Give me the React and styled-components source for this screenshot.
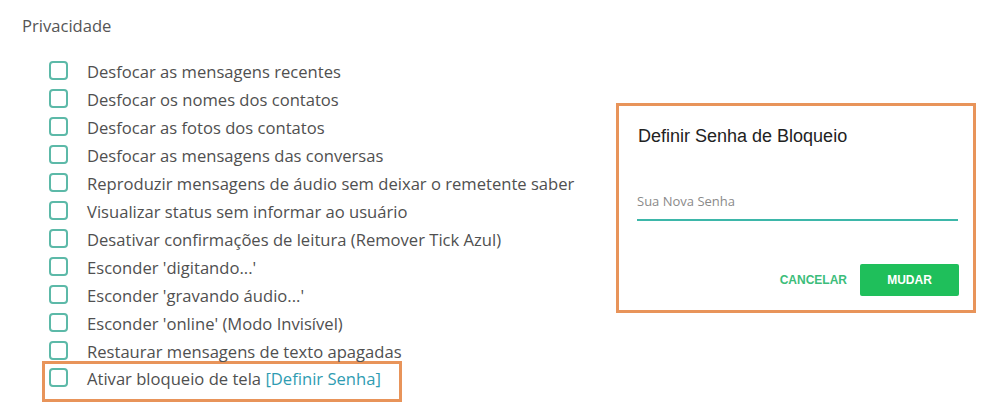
import React, { useState } from 'react'
import styled, { createGlobalStyle } from 'styled-components'

const GlobalStyle = createGlobalStyle`
  html, body {
    margin: 0;
    padding: 0;
    background: #fff;
  }
  body {
    font-family: 'Open Sans', 'Noto Sans', sans-serif;
    color: #444;
  }
`

const Page = styled.div`
  width: 1000px;
  height: 417px;
  display: flex;
  flex-flow: row nowrap;
  align-items: flex-start;
  overflow: hidden;
`

const Settings = styled.section`
  width: 616px;
  padding-left: 22px;
  box-sizing: border-box;
`

const Title = styled.h2`
  margin: 16px 0 0;
  font-size: 16.6px;
  line-height: 20px;
  font-weight: 400;
  color: #555;
`

const List = styled.ul`
  list-style: none;
  margin: 20px 0 0 27px;
  padding: 0;
`

const Row = styled.li`
  display: flex;
  align-items: center;
  gap: 19px;
  height: 28px;
  font-size: 16.6px;
  line-height: 20px;
  color: #505050;
  cursor: pointer;
  span:last-child {
    padding-top: 3px;
  }
  ${({ $highlight }) => $highlight && `
    height: auto;
    width: 360px;
    box-sizing: border-box;
    align-items: flex-start;
    margin: -3px 0 0 -7px;
    padding: 4px 0 10px 4px;
    border: 3px solid #e8945a;
    span:last-child {
      padding-top: 1px;
    }
  `}
`

const Box = styled.span`
  flex: none;
  width: 19px;
  height: 19px;
  box-sizing: border-box;
  border: 2px solid #5cb9a8;
  border-radius: 4px;
  background: ${({ $checked }) => ($checked ? '#5cb9a8' : '#fff')};
`

const Link = styled.a`
  color: #2f9cb2;
  text-decoration: none;
`

const Dialog = styled.div`
  margin-top: 103px;
  width: 360px;
  height: 210px;
  box-sizing: border-box;
  border: 3px solid #e8945a;
  background: #fff;
  padding: 20px 14px 14px 19px;
  display: flex;
  flex-direction: column;
`

const DialogTitle = styled.h3`
  margin: 0;
  font-family: 'Liberation Sans', Arial, sans-serif;
  font-size: 18px;
  line-height: 20px;
  font-weight: 400;
  color: #222;
`

const Field = styled.label`
  display: block;
  margin-top: 46px;
`

const FieldInput = styled.input`
  display: block;
  width: 100%;
  box-sizing: border-box;
  border: none;
  border-bottom: 2px solid #3db7a9;
  outline: none;
  padding: 0 0 9px;
  margin-left: -1px;
  font-family: 'Open Sans', 'Noto Sans', sans-serif;
  font-size: 13px;
  line-height: 18px;
  color: #444;
  background: transparent;
  &::placeholder {
    color: #8a8a8a;
  }
`

const Actions = styled.div`
  margin-top: auto;
  display: flex;
  justify-content: flex-end;
  align-items: center;
  gap: 13px;
`

const Button = styled.button`
  font-family: 'Liberation Sans', Arial, sans-serif;
  font-size: 12px;
  font-weight: 700;
  text-transform: uppercase;
  border: none;
  border-radius: 2px;
  cursor: pointer;
  height: 32px;
  padding: 0;
  color: ${({ $primary }) => ($primary ? '#fff' : '#3cbd7a')};
  background: ${({ $primary }) => ($primary ? '#1fbf5b' : 'transparent')};
  width: ${({ $primary }) => ($primary ? '99px' : 'auto')};
`

const options = [
  'Desfocar as mensagens recentes',
  'Desfocar os nomes dos contatos',
  'Desfocar as fotos dos contatos',
  'Desfocar as mensagens das conversas',
  'Reproduzir mensagens de áudio sem deixar o remetente saber',
  'Visualizar status sem informar ao usuário',
  'Desativar confirmações de leitura (Remover Tick Azul)',
  "Esconder 'digitando...'",
  "Esconder 'gravando áudio...'",
  "Esconder 'online' (Modo Invisível)",
  'Restaurar mensagens de texto apagadas'
]

function App() {
  const [checked, setChecked] = useState({})
  const [password, setPassword] = useState('')

  const toggle = (key) => {
    setChecked({ ...checked, [key]: !checked[key] })
  }

  return (
    <>
      <GlobalStyle />
      <Page>
        <Settings>
          <Title>Privacidade</Title>
          <List>
            {options.map(label => (
              <Row key={label} onClick={() => toggle(label)}>
                <Box $checked={checked[label]} />
                <span>{label}</span>
              </Row>
            ))}
            <Row $highlight onClick={() => toggle('lock')}>
              <Box $checked={checked.lock} />
              <span>Ativar bloqueio de tela <Link href='#'>[Definir Senha]</Link></span>
            </Row>
          </List>
        </Settings>
        <Dialog>
          <DialogTitle>Definir Senha de Bloqueio</DialogTitle>
          <Field>
            <FieldInput
              type='password'
              placeholder='Sua Nova Senha'
              value={password}
              onChange={e => setPassword(e.target.value)}
            />
          </Field>
          <Actions>
            <Button>Cancelar</Button>
            <Button $primary>Mudar</Button>
          </Actions>
        </Dialog>
      </Page>
    </>
  )
}

export default App
